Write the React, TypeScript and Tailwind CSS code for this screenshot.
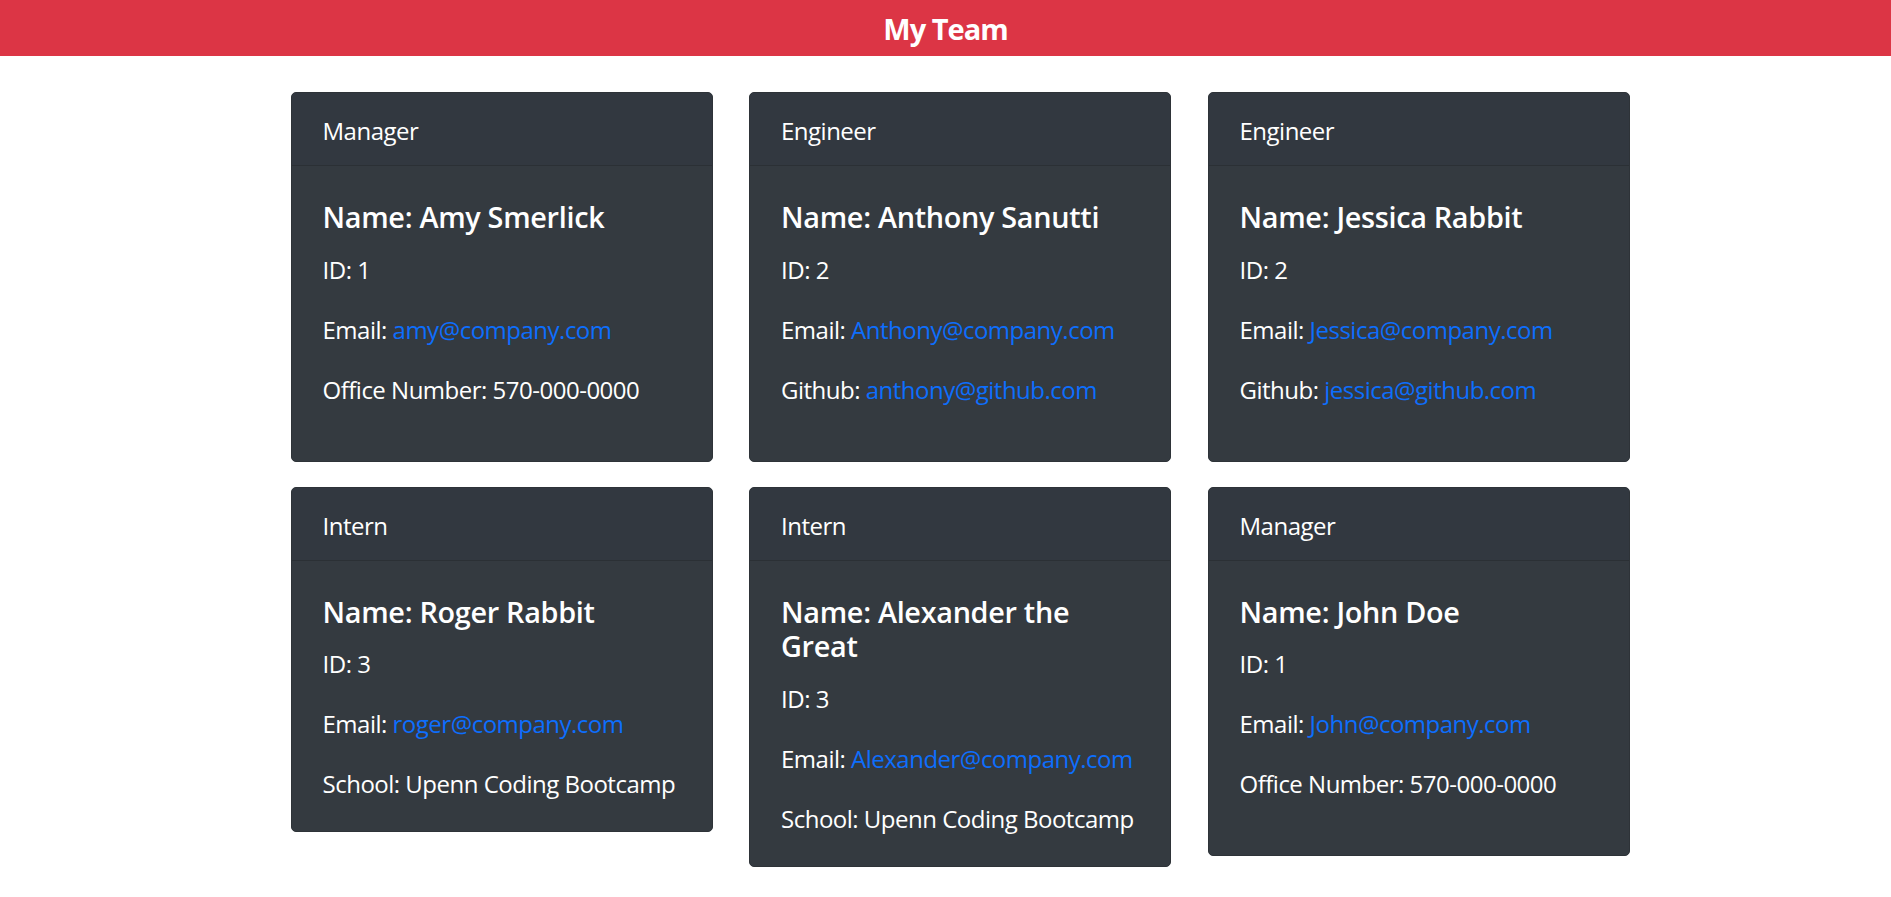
import React from "react";

type Field = { label: string; value: string; link?: boolean };
type Member = { role: string; name: string; fields: Field[]; last?: boolean };

const members: Member[] = [
  {
    role: "Manager",
    name: "Amy Smerlick",
    fields: [
      { label: "ID", value: "1" },
      { label: "Email", value: "amy@company.com", link: true },
      { label: "Office Number", value: "570-000-0000" },
    ],
    last: true,
  },
  {
    role: "Engineer",
    name: "Anthony Sanutti",
    fields: [
      { label: "ID", value: "2" },
      { label: "Email", value: "Anthony@company.com", link: true },
      { label: "Github", value: "anthony@github.com", link: true },
    ],
    last: true,
  },
  {
    role: "Engineer",
    name: "Jessica Rabbit",
    fields: [
      { label: "ID", value: "2" },
      { label: "Email", value: "Jessica@company.com", link: true },
      { label: "Github", value: "jessica@github.com", link: true },
    ],
    last: true,
  },
  {
    role: "Intern",
    name: "Roger Rabbit",
    fields: [
      { label: "ID", value: "3" },
      { label: "Email", value: "roger@company.com", link: true },
      { label: "School", value: "Upenn Coding Bootcamp" },
    ],
  },
  {
    role: "Intern",
    name: "Alexander the Great",
    fields: [
      { label: "ID", value: "3" },
      { label: "Email", value: "Alexander@company.com", link: true },
      { label: "School", value: "Upenn Coding Bootcamp" },
    ],
  },
  {
    role: "Manager",
    name: "John Doe",
    fields: [
      { label: "ID", value: "1" },
      { label: "Email", value: "John@company.com", link: true },
      { label: "Office Number", value: "570-000-0000" },
    ],
    last: true,
  },
];

function Card({ m }: { m: Member }) {
  return (
    <div className="bg-[#343a40] text-white rounded-[5px] border border-[#2e3338] overflow-hidden">
      <div className="px-[31px] pt-[20px] pb-[16px] text-[24px] leading-[36px] tracking-[-0.5px] bg-[#323840] border-b border-[#2b3035]">
        {m.role}
      </div>
      <div className="px-[31px] pt-[34px] pb-[29px]">
        <h5 className="text-[28.8px] leading-[34.6px] font-semibold tracking-[-0.3px] mb-[17px]">
          Name: {m.name}
        </h5>
        {m.fields.map((f, i) => {
          const isLast = i === m.fields.length - 1;
          return (
            <p
              key={i}
              className={`text-[24px] leading-[36px] tracking-[-0.5px] whitespace-nowrap ${
                isLast && !m.last ? "mb-0" : "mb-[24px]"
              }`}
            >
              {f.label}:{" "}
              {f.link ? (
                <a href="#" className="text-[#0d6efd]">
                  {f.value}
                </a>
              ) : (
                f.value
              )}
            </p>
          );
        })}
      </div>
    </div>
  );
}

export default function App() {
  return (
    <div
      className="min-h-screen bg-white"
      style={{ fontFamily: '"Open Sans", "Noto Sans", sans-serif' }}
    >
      <header className="h-[56px] bg-[#dc3545] flex items-center justify-center">
        <h1 className="text-white font-bold text-[29px] leading-none tracking-[-1px] pt-[1px]">
          My Team
        </h1>
      </header>
      <main className="w-[1368px] mx-auto pl-[29px] pt-[36px]">
        <div className="grid grid-cols-[422px_422px_422px] gap-x-[36.5px] gap-y-[25px] items-start">
          {members.map((m, i) => (
            <Card key={i} m={m} />
          ))}
        </div>
      </main>
    </div>
  );
}
